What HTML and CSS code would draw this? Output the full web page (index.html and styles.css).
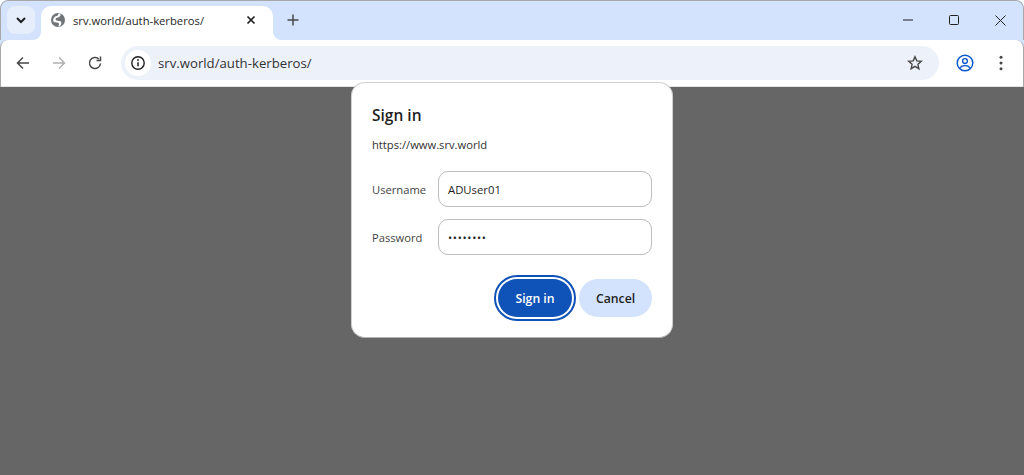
FILE: index.html
```html
<!DOCTYPE html>
<html lang="en">
<head>
<meta charset="utf-8">
<title>srv.world/auth-kerberos/</title>
<link rel="stylesheet" href="styles.css">
</head>
<body>
<div class="window">
  <div class="tabstrip">
    <div class="tab-search">
      <svg width="12" height="12" viewBox="0 0 12 12"><path d="M2 4l4 4 4-4" fill="none" stroke="#1f1f1f" stroke-width="2"/></svg>
    </div>
    <div class="tab">
      <svg class="globe" width="16" height="16" viewBox="0 0 16 16"><circle cx="8" cy="8" r="7" fill="#70757a"/><path d="M10.500 1.500C11 4 9 5.500 7 5.800 5.500 6 5 7.500 6.500 8.500c1.500.8 3.500 0 4.500 1.200 1 1.300 0 2.800-1 4.300l-2 .5c1-1.500 1.500-2.800.5-3.500-1.500-.8-4 .2-5-1.500C2.500 7.500 4 4.500 6.500 4c1.500-.3 2-1.300 2-2.500z" fill="#fff"/></svg>
      <span class="tab-title">srv.world/auth-kerberos/</span>
      <svg class="tab-close" width="10" height="10" viewBox="0 0 10 10"><path d="M1.500 1.500l7 7M8.500 1.500l-7 7" stroke="#1f1f1f" stroke-width="1.700"/></svg>
    </div>
    <div class="new-tab">
      <svg width="12" height="12" viewBox="0 0 12 12"><path d="M6 .5v11M.5 6h11" stroke="#474747" stroke-width="1.500"/></svg>
    </div>
    <div class="window-controls">
      <svg width="10" height="10" viewBox="0 0 10 10"><path d="M0 5h10" stroke="#1f1f1f"/></svg>
      <svg width="10" height="10" viewBox="0 0 10 10"><rect x=".5" y=".5" width="9" height="9" rx="1" fill="none" stroke="#1f1f1f"/></svg>
      <svg width="11" height="11" viewBox="0 0 11 11"><path d="M.5.500l10 10M10.500.500l-10 10" stroke="#1f1f1f"/></svg>
    </div>
  </div>
  <div class="toolbar">
    <svg class="nav" width="16" height="16" viewBox="0 0 16 16"><path d="M14 8H2.500M8 2.500L2.500 8 8 13.500" fill="none" stroke="#474747" stroke-width="1.500"/></svg>
    <svg class="nav" width="16" height="16" viewBox="0 0 16 16"><path d="M2 8h11.500M8 2.500L13.500 8 8 13.500" fill="none" stroke="#b0b0b0" stroke-width="1.500"/></svg>
    <svg class="nav" width="16" height="16" viewBox="0 0 16 16"><path d="M13.500 8.500A5.500 5.500 0 1 1 11.800 4M13.500 1.500v4h-4" fill="none" stroke="#474747" stroke-width="1.500"/></svg>
    <div class="omnibox">
      <div class="chip">
        <svg width="16" height="16" viewBox="0 0 16 16"><circle cx="8" cy="8" r="6.200" fill="none" stroke="#1f1f1f" stroke-width="1.400"/><path d="M8 7.200v4" stroke="#1f1f1f" stroke-width="1.500"/><circle cx="8" cy="5" r=".9" fill="#1f1f1f"/></svg>
      </div>
      <span class="url">srv.world/auth-kerberos/</span>
      <svg class="star" width="16" height="16" viewBox="0 0 16 16"><path d="M8 1.800l1.800 4.100 4.500.4-3.400 3 1 4.400L8 11.400l-3.900 2.300 1-4.400-3.400-3 4.500-.4z" fill="none" stroke="#474747" stroke-width="1.400"/></svg>
    </div>
    <svg class="profile" width="18" height="18" viewBox="0 0 18 18"><circle cx="9" cy="9" r="7.800" fill="none" stroke="#0b57d0" stroke-width="1.500"/><circle cx="9" cy="7" r="2.400" fill="none" stroke="#0b57d0" stroke-width="1.400"/><path d="M3.800 14c1.500-2 3.300-2.500 5.200-2.500s3.700.5 5.200 2.500" fill="none" stroke="#0b57d0" stroke-width="1.400"/></svg>
    <svg class="menu" width="4" height="16" viewBox="0 0 4 16"><circle cx="2" cy="2.300" r="1.500" fill="#474747"/><circle cx="2" cy="8" r="1.500" fill="#474747"/><circle cx="2" cy="13.700" r="1.500" fill="#474747"/></svg>
  </div>
  <div class="content"></div>
  <form class="dialog">
    <h1 class="dialog-title">Sign in</h1>
    <p class="origin">https://www.srv.world</p>
    <div class="field">
      <label class="field-label">Username</label>
      <div class="input">ADUser01</div>
    </div>
    <div class="field">
      <label class="field-label">Password</label>
      <div class="input dots">••••••••</div>
    </div>
    <div class="actions">
      <button type="button" class="btn primary">Sign in</button>
      <button type="button" class="btn secondary">Cancel</button>
    </div>
  </form>
</div>
</body>
</html>
```

FILE: styles.css
```css
* { box-sizing: border-box; }
html, body { margin: 0; height: 100%; overflow: hidden; background: #fff; }
body { font-family: "Open Sans", "Noto Sans", sans-serif; color: #1f1f1f; }

.window {
  position: relative;
  width: 1024px;
  height: 475px;
  display: flex;
  flex-direction: column;
  border-radius: 8px 8px 0 0;
  overflow: hidden;
  background: #d3e3fd;
}

.tabstrip {
  height: 40px;
  flex: none;
  display: flex;
  align-items: flex-start;
  background: #d3e3fd;
  border: 1px solid #a8a8a8;
  border-bottom: 0;
  border-radius: 8px 8px 0 0;
  padding: 5px 0 0 6px;
}
.tab-search {
  width: 28px;
  height: 28px;
  border-radius: 8px;
  background: #e6eefb;
  display: flex;
  align-items: center;
  justify-content: center;
  margin-right: 6px;
}
.tab {
  position: relative;
  width: 232px;
  height: 34px;
  background: #fff;
  border-radius: 10px 10px 0 0;
  display: flex;
  align-items: center;
  padding: 0 17px 6px 9px;
  font-size: 11.250px;
}
.tab::before, .tab::after {
  content: "";
  position: absolute;
  bottom: 0;
  width: 8px;
  height: 8px;
  background: radial-gradient(circle at 100% 0, #d3e3fd 7.500px, #fff 8.200px);
}
.tab::before { left: -8px; transform: scaleX(-1); }
.tab::after { right: -8px; }
.tab-title { flex: 1; margin-left: 7px; color: #1f1f1f; }
.new-tab {
  width: 12px;
  height: 12px;
  margin: 8px 0 0 14px;
  display: flex;
}
.window-controls {
  margin-left: auto;
  height: 28px;
  display: flex;
  align-items: center;
  gap: 36px;
  padding-right: 17px;
}

.toolbar {
  height: 47px;
  flex: none;
  display: flex;
  align-items: center;
  background: #fff;
  border: 1px solid #a8a8a8;
  border-width: 0 1px;
  border-radius: 8px 8px 0 0;
  box-shadow: inset 0 -1px 0 #e4e4e4;
  padding: 0 14px 1px;
}
.nav { margin-right: 20px; flex: none; }
.omnibox {
  margin-left: -2px;
  width: 818px;
  height: 34px;
  border-radius: 17px;
  background: #edf2fa;
  display: flex;
  align-items: center;
  padding: 0 16px 0 4px;
  font-size: 13.200px;
}
.chip {
  width: 26px;
  height: 26px;
  border-radius: 50%;
  background: #fff;
  display: flex;
  align-items: center;
  justify-content: center;
}
.url { flex: 1; margin-left: 7px; color: #333; }
.profile { margin-left: 17px; }
.menu { margin-left: 25px; }

.content { flex: 1; background: #666; }

.dialog {
  position: absolute;
  left: 351px;
  top: 82px;
  width: 322px;
  height: 256px;
  background: #fff;
  border: 1px solid #d0d0d0;
  border-bottom-color: #b4b4b4;
  border-radius: 14px;
  padding: 21px 20px 0;
  display: flex;
  flex-direction: column;
}
.dialog-title {
  margin: 0;
  font-size: 15.500px;
  line-height: 22px;
  font-weight: 600;
  color: #1f1f1f;
}
.origin {
  margin: 10px 0 17px;
  font-size: 11.200px;
  line-height: 18px;
  color: #303030;
}
.field {
  display: flex;
  align-items: center;
  margin-bottom: 12px;
}
.field-label {
  width: 66px;
  font-size: 11.200px;
  color: #444;
}
.input {
  width: 214px;
  height: 36px;
  border: 1px solid #bdbdbd;
  border-radius: 10px;
  padding: 0 9px;
  display: flex;
  align-items: center;
  font-size: 11.300px;
  color: #1f1f1f;
}
.input.dots { letter-spacing: .7px; font-size: 11px; }
.actions {
  display: flex;
  justify-content: flex-end;
  gap: 7px;
  margin-top: 12px;
}
.btn {
  height: 38px;
  border: 0;
  border-radius: 19px;
  font-family: inherit;
  font-size: 12.250px;
  font-weight: 600;
}
.primary {
  width: 74px;
  background: #0f52b8;
  color: #fff;
  outline: 2px solid #0f52b8;
  outline-offset: 2px;
}
.secondary {
  width: 73px;
  background: #d3e3fd;
  color: #1f1f1f;
}
```
